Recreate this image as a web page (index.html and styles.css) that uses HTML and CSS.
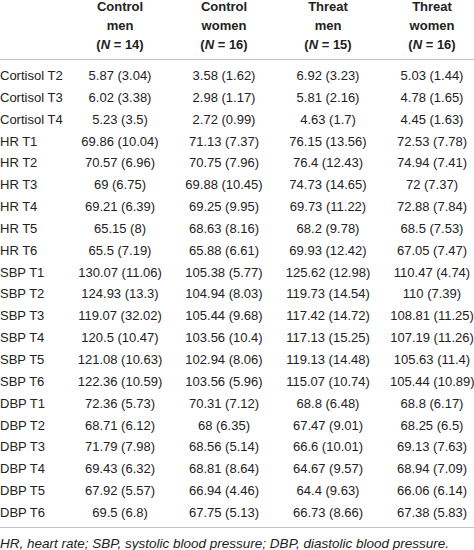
FILE: index.html
```html
<!DOCTYPE html>
<html lang="en">
<head>
<meta charset="utf-8">
<title>Table</title>
<link rel="stylesheet" href="styles.css">
</head>
<body>
<div class="wrap">
<table class="data">
<colgroup>
<col class="c-label"><col class="c-data"><col class="c-data"><col class="c-data"><col class="c-last">
</colgroup>
<thead>
<tr>
<th></th>
<th>Control<br>men<br>(<i>N</i> = 14)</th>
<th>Control<br>women<br>(<i>N</i> = 16)</th>
<th>Threat<br>men<br>(<i>N</i> = 15)</th>
<th class="last">Threat<br>women<br>(<i>N</i> = 16)</th>
</tr>
</thead>
<tbody>
<tr class="first"><td>Cortisol T2</td><td>5.87 (3.04)</td><td>3.58 (1.62)</td><td>6.92 (3.23)</td><td class="last">5.03 (1.44)</td></tr>
<tr><td>Cortisol T3</td><td>6.02 (3.38)</td><td>2.98 (1.17)</td><td>5.81 (2.16)</td><td class="last">4.78 (1.65)</td></tr>
<tr><td>Cortisol T4</td><td>5.23 (3.5)</td><td>2.72 (0.99)</td><td>4.63 (1.7)</td><td class="last">4.45 (1.63)</td></tr>
<tr><td>HR T1</td><td>69.86 (10.04)</td><td>71.13 (7.37)</td><td>76.15 (13.56)</td><td class="last">72.53 (7.78)</td></tr>
<tr><td>HR T2</td><td>70.57 (6.96)</td><td>70.75 (7.96)</td><td>76.4 (12.43)</td><td class="last">74.94 (7.41)</td></tr>
<tr><td>HR T3</td><td>69 (6.75)</td><td>69.88 (10.45)</td><td>74.73 (14.65)</td><td class="last">72 (7.37)</td></tr>
<tr><td>HR T4</td><td>69.21 (6.39)</td><td>69.25 (9.95)</td><td>69.73 (11.22)</td><td class="last">72.88 (7.84)</td></tr>
<tr><td>HR T5</td><td>65.15 (8)</td><td>68.63 (8.16)</td><td>68.2 (9.78)</td><td class="last">68.5 (7.53)</td></tr>
<tr><td>HR T6</td><td>65.5 (7.19)</td><td>65.88 (6.61)</td><td>69.93 (12.42)</td><td class="last">67.05 (7.47)</td></tr>
<tr><td>SBP T1</td><td>130.07 (11.06)</td><td>105.38 (5.77)</td><td>125.62 (12.98)</td><td class="last">110.47 (4.74)</td></tr>
<tr><td>SBP T2</td><td>124.93 (13.3)</td><td>104.94 (8.03)</td><td>119.73 (14.54)</td><td class="last">110 (7.39)</td></tr>
<tr><td>SBP T3</td><td>119.07 (32.02)</td><td>105.44 (9.68)</td><td>117.42 (14.72)</td><td class="last">108.81 (11.25)</td></tr>
<tr><td>SBP T4</td><td>120.5 (10.47)</td><td>103.56 (10.4)</td><td>117.13 (15.25)</td><td class="last">107.19 (11.26)</td></tr>
<tr><td>SBP T5</td><td>121.08 (10.63)</td><td>102.94 (8.06)</td><td>119.13 (14.48)</td><td class="last">105.63 (11.4)</td></tr>
<tr><td>SBP T6</td><td>122.36 (10.59)</td><td>103.56 (5.96)</td><td>115.07 (10.74)</td><td class="last">105.44 (10.89)</td></tr>
<tr><td>DBP T1</td><td>72.36 (5.73)</td><td>70.31 (7.12)</td><td>68.8 (6.48)</td><td class="last">68.8 (6.17)</td></tr>
<tr><td>DBP T2</td><td>68.71 (6.12)</td><td>68 (6.35)</td><td>67.47 (9.01)</td><td class="last">68.25 (6.5)</td></tr>
<tr><td>DBP T3</td><td>71.79 (7.98)</td><td>68.56 (5.14)</td><td>66.6 (10.01)</td><td class="last">69.13 (7.63)</td></tr>
<tr><td>DBP T4</td><td>69.43 (6.32)</td><td>68.81 (8.64)</td><td>64.67 (9.57)</td><td class="last">68.94 (7.09)</td></tr>
<tr><td>DBP T5</td><td>67.92 (5.57)</td><td>66.94 (4.46)</td><td>64.4 (9.63)</td><td class="last">66.06 (6.14)</td></tr>
<tr class="final"><td>DBP T6</td><td>69.5 (6.8)</td><td>67.75 (5.13)</td><td>66.73 (8.66)</td><td class="last">67.38 (5.83)</td></tr>
</tbody>
</table>
<p class="note">HR, heart rate; SBP, systolic blood pressure; DBP, diastolic blood pressure.</p>
</div>
</body>
</html>
```

FILE: styles.css
```css
html, body {
  margin: 0;
  padding: 0;
  background: #ffffff;
  overflow: hidden;
}
body {
  font-family: "Liberation Sans", Arial, sans-serif;
  color: #222222;
  font-size: 13px;
}
.wrap {
  width: 474px;
  margin-top: -3px;
}
.data {
  width: 474px;
  table-layout: fixed;
  border-collapse: collapse;
  border-spacing: 0;
}
.c-label { width: 68px; }
.c-data { width: 104px; }
.c-last { width: 94px; }
.data th {
  font-weight: bold;
  line-height: 19px;
  padding: 0 0 5px 0;
  text-align: center;
  border-bottom: 1px solid #c4c4c4;
  white-space: nowrap;
}
.data td {
  line-height: 21.85px;
  padding: 0;
  text-align: center;
  white-space: nowrap;
}
.data td:first-child {
  text-align: left;
}
.data .last {
  padding-left: 10px;
}
.data tr.first td {
  padding-top: 5px;
}
.data tr.final td {
  padding-bottom: 3px;
  border-bottom: 1px solid #c4c4c4;
}
.note {
  margin: 0;
  padding-top: 7px;
  font-size: 13.5px;
  line-height: 18px;
  font-style: italic;
  white-space: nowrap;
}
```
